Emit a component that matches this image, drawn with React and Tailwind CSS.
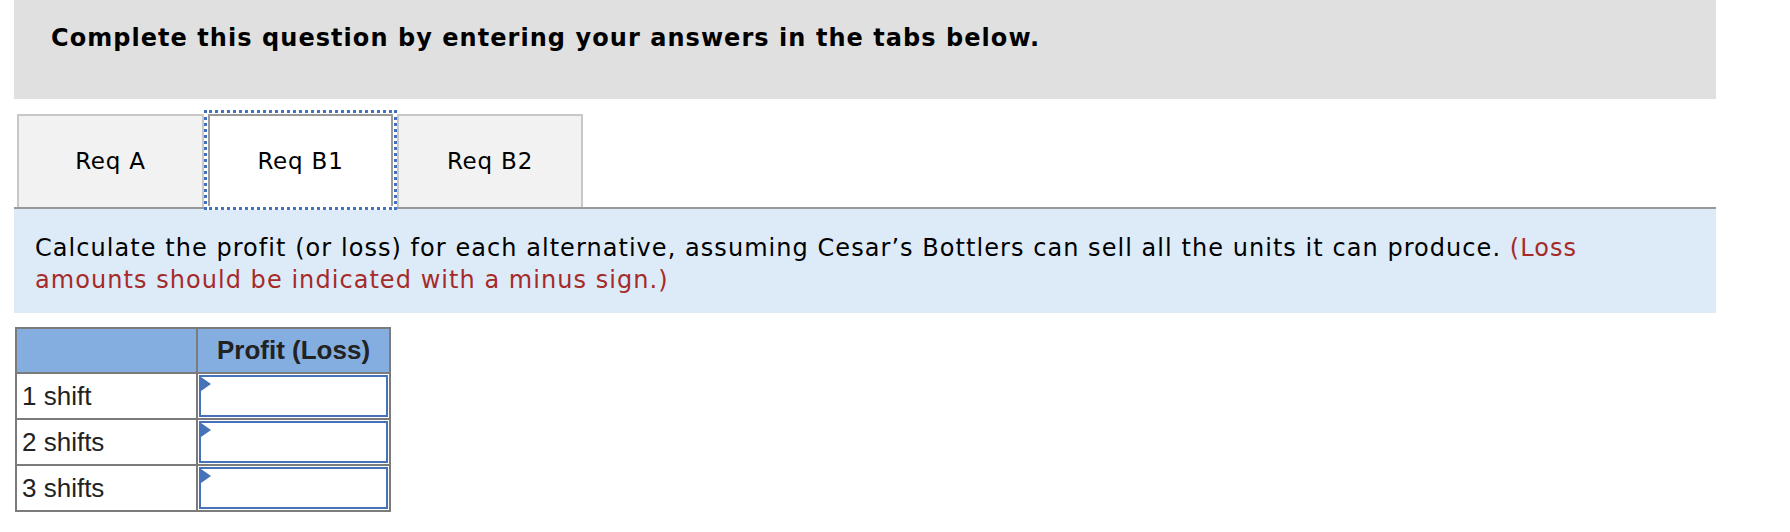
import React from "react";

const tabs = [
  { label: "Req A", w: "w-[187px]", active: false },
  { label: "Req B1", w: "w-[193px]", active: true },
  { label: "Req B2", w: "w-[186px]", active: false },
];

const rows = ["1 shift", "2 shifts", "3 shifts"];

const AnswerCell = () => (
  <td className="border-2 border-[#7b7b7b] p-[1px] h-[46px]">
    <div className="relative h-full w-full border-2 border-[#4672b8] bg-white">
      <span className="absolute left-0 top-0 w-0 h-0 border-y-[7px] border-y-transparent border-l-[10px] border-l-[#4672b8]" />
    </div>
  </td>
);

const App = () => {
  return (
    <div className="w-[1790px] h-[532px] bg-white font-['DejaVu_Sans',Verdana,sans-serif] text-black">
      <div className="ml-[14px] w-[1702px]">
        <div className="h-[99px] bg-[#e0e0e0] pl-[37px] pt-[24px]">
          <h2 className="text-[24px] leading-[28px] font-bold tracking-[1.05px]">
            Complete this question by entering your answers in the tabs below.
          </h2>
        </div>

        <div className="mt-[15px] ml-[3px] flex h-[93px]">
          {tabs.map((t) =>
            t.active ? (
              <div
                key={t.label}
                className={`${t.w} relative z-10 -mt-[4px] h-[100px] border-[3px] border-dotted border-[#4272bd] p-[1px] bg-white`}
              >
                <div className="h-[92px] flex items-center justify-center bg-white border-2 border-b-0 border-[#9a9a9a] text-[23px] tracking-[0.8px]">
                  {t.label}
                </div>
              </div>
            ) : (
              <div
                key={t.label}
                className={`${t.w} flex items-center justify-center bg-[#f2f2f2] border-2 border-b-0 border-[#c8c8c8] text-[23px] tracking-[0.8px]`}
              >
                {t.label}
              </div>
            )
          )}
        </div>
        <div className="h-[2px] bg-[#999999]" />

        <div className="h-[104px] bg-[#ddebf8] pl-[21px] pt-[23px]">
          <p className="w-[1610px] text-[24px] leading-[32px] tracking-[1.05px]">
            Calculate the profit (or loss) for each alternative, assuming Cesar’s Bottlers can sell all the units it can produce.{" "}
            <span className="text-[#a52a2a]">(Loss amounts should be indicated with a minus sign.)</span>
          </p>
        </div>

        <table className="mt-[14px] ml-[1px] border-collapse font-['Liberation_Sans',Arial,sans-serif] text-[#222] text-[26px]">
          <thead>
            <tr className="bg-[#84ade0] h-[45px]">
              <th className="w-[181px] border-2 border-[#7b7b7b]" />
              <th className="w-[193px] border-2 border-[#7b7b7b] font-bold text-center">Profit (Loss)</th>
            </tr>
          </thead>
          <tbody>
            {rows.map((r) => (
              <tr key={r}>
                <td className="border-2 border-[#7b7b7b] pl-[5px] h-[46px] leading-none">{r}</td>
                <AnswerCell />
              </tr>
            ))}
          </tbody>
        </table>
      </div>
    </div>
  );
};

export default App;
